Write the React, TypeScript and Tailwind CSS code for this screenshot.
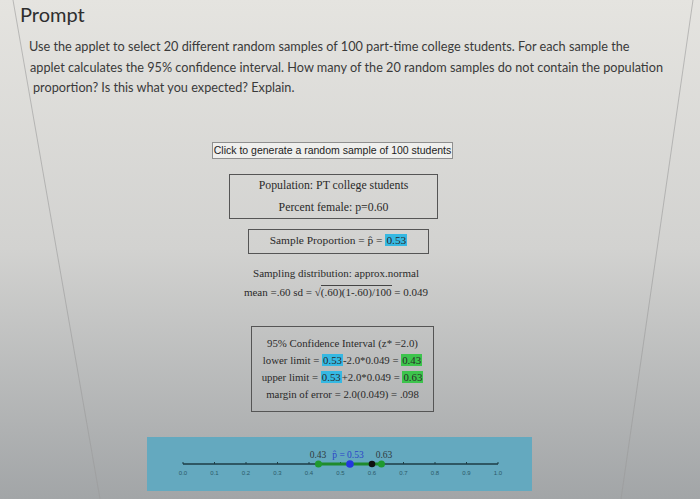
import React from 'react';

const serif = "font-['Liberation_Serif','Times_New_Roman',serif]";

// number line: 0.0 at x=36, 1.0 at x=351 inside the strip
const toX = (v: number) => 36 + v * 315;
const ticks = [0, 0.1, 0.2, 0.3, 0.4, 0.5, 0.6, 0.7, 0.8, 0.9, 1.0];

const Hi: React.FC<{ color: 'blue' | 'green'; children: React.ReactNode }> = ({ color, children }) => (
  <span className={color === 'blue' ? 'bg-[#35b8e2] px-px' : 'bg-[#3cc44c] px-px'}>{children}</span>
);

const NumberLine: React.FC = () => (
  <div className="ml-[147px] mt-[25px] h-[54px] w-[385px] bg-[#64a9bf]">
    <svg width="385" height="54" viewBox="0 0 385 54">
      <line x1={toX(0)} y1="27" x2={toX(1)} y2="27" stroke="#1d3c44" strokeWidth="1.3" />
      {ticks.map((t) => (
        <g key={t}>
          <line x1={toX(t)} y1="25" x2={toX(t)} y2="27" stroke="#1d3c44" strokeWidth="1" />
          <text x={toX(t)} y="38" textAnchor="middle" fontSize="6" fill="#2c5a68" fontFamily="Liberation Sans, Arial, sans-serif">
            {t.toFixed(1)}
          </text>
        </g>
      ))}
      <line x1={toX(0.43)} y1="27" x2={toX(0.63)} y2="27" stroke="#1f8a2c" strokeWidth="3" />
      <circle cx={toX(0.43)} cy="27" r="3.5" fill="#1f9a2e" />
      <circle cx={toX(0.63)} cy="27" r="3.5" fill="#1f9a2e" />
      <circle cx={toX(0.53)} cy="27" r="3.8" fill="#2536e0" />
      <circle cx={toX(0.6)} cy="27" r="3.3" fill="#111" />
      <text x="171" y="21" textAnchor="middle" fontSize="9.5" fill="#2f3a3e" fontFamily="Liberation Serif, serif">0.43</text>
      <text x="201" y="21" textAnchor="middle" fontSize="9.5" fill="#2a44c8" fontFamily="Liberation Serif, serif">p̂ = 0.53</text>
      <text x="237" y="21" textAnchor="middle" fontSize="9.5" fill="#2f3a3e" fontFamily="Liberation Serif, serif">0.63</text>
    </svg>
  </div>
);

export default function App() {
  return (
    <div className="relative h-[499px] w-[700px] overflow-hidden bg-linear-to-b from-[#e5e4e0] via-[#d2d2d0] to-[#a2a5a7] text-[#333]">
      {/* photo edges of the panel */}
      <svg className="pointer-events-none absolute inset-0" width="700" height="499">
        <line x1="13" y1="0" x2="100" y2="499" stroke="#9a9a9a" strokeWidth="0.6" />
        <line x1="693" y1="0" x2="621" y2="499" stroke="#9a9a9a" strokeWidth="0.6" />
      </svg>

      <div className="relative flex flex-col">
        <h1 className="ml-[20px] mt-[1px] font-['Lato','Open_Sans',sans-serif] text-[20px] leading-[26px] text-[#2e2e2e]">Prompt</h1>

        <p className="ml-[29px] mt-[9px] font-['Lato','Open_Sans',sans-serif] text-[12.7px] leading-[20.5px] text-[#3a3a3a]">
          <span className="block">
            Use the applet to select 20 different random samples of 100 part-time college students. For each sample the
          </span>
          <span className="block pl-px">
            applet calculates the 95% confidence interval. How many of the 20 random samples do not contain the population
          </span>
          <span className="block pl-[4px]">proportion? Is this what you expected? Explain.</span>
        </p>

        <button className="ml-[212px] mt-[44px] h-[17px] w-[241px] border border-[#8f8f8f] bg-[#efefed] font-['Liberation_Sans',Arial,sans-serif] text-[10.5px] leading-[15px] text-[#222]">
          Click to generate a random sample of 100 students
        </button>

        <div className={`ml-[229px] mt-[15px] flex h-[45px] w-[209px] flex-col items-center justify-center gap-[9px] border border-[#555] ${serif} text-[11.8px] leading-[13px] text-[#2a2a2a]`}>
          <div>Population: PT college students</div>
          <div>Percent female: p=0.60</div>
        </div>

        <div className={`ml-[248px] mt-[10px] flex h-[25px] w-[181px] items-center justify-center border border-[#555] ${serif} text-[11.4px] text-[#2a2a2a]`}>
          <span>
            Sample Proportion = p̂ = <Hi color="blue">0.53</Hi>
          </span>
        </div>

        <div className={`ml-[236px] mt-[13px] flex w-[200px] flex-col items-center gap-[6px] ${serif} text-[11px] leading-[13px] text-[#2a2a2a]`}>
          <div>Sampling distribution: approx.normal</div>
          <div className="whitespace-nowrap">
            mean =.60 sd = √<span className="border-t border-[#444]">(.60)(1-.60)/100</span> = 0.049
          </div>
        </div>

        <div className={`ml-[251px] mt-[27px] flex h-[86px] w-[183px] flex-col items-center justify-center gap-[4px] border border-[#555] ${serif} text-[10.8px] leading-[13px] text-[#2a2a2a]`}>
          <div>95% Confidence Interval (z* =2.0)</div>
          <div className="whitespace-nowrap">
            lower limit = <Hi color="blue">0.53</Hi>-2.0*0.049 = <Hi color="green">0.43</Hi>
          </div>
          <div className="whitespace-nowrap">
            upper limit = <Hi color="blue">0.53</Hi>+2.0*0.049 = <Hi color="green">0.63</Hi>
          </div>
          <div>margin of error = 2.0(0.049) = .098</div>
        </div>

        <NumberLine />
      </div>
    </div>
  );
}
